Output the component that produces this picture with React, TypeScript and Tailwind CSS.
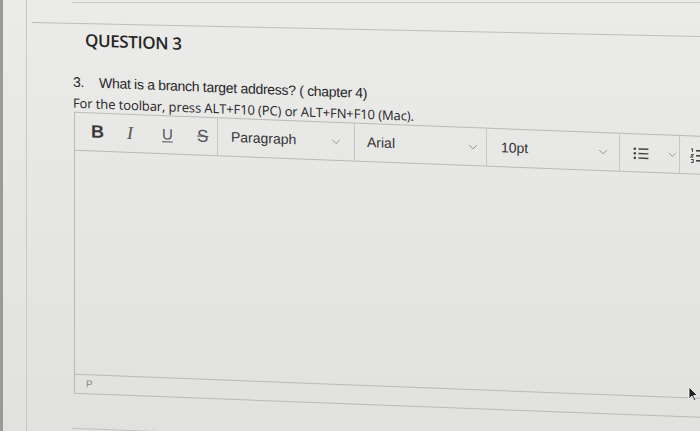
import React from 'react';
import { ChevronDown } from 'lucide-react';

const Chevron = () => <ChevronDown size={14} strokeWidth={1.5} className="text-[#8a8a8a]" />;

const BulletIcon = () => (
  <svg width="18" height="16" viewBox="0 0 18 16" fill="none">
    <circle cx="2" cy="3" r="1.4" fill="#444" />
    <circle cx="2" cy="8" r="1.4" fill="#444" />
    <circle cx="2" cy="13" r="1.4" fill="#444" />
    <path d="M6 3h11M6 8h11M6 13h11" stroke="#444" strokeWidth="1.6" />
  </svg>
);

const NumberIcon = () => (
  <svg width="18" height="16" viewBox="0 0 18 16" fill="none">
    <path d="M1 1.5h1.5v3M1 7h2.2L1 9.5h2.4M1 12h2.2v3H1" stroke="#444" strokeWidth="1" />
    <path d="M6 3h11M6 8h11M6 13h11" stroke="#444" strokeWidth="1.6" />
  </svg>
);

const Cursor = () => (
  <svg width="10" height="16" viewBox="0 0 10 16">
    <path d="M1 1v12l3-3 2.5 5 1.6-.8L5.6 9.5H9.5z" fill="#222" stroke="#fff" strokeWidth="0.8" />
  </svg>
);

export default function App() {
  return (
    <div className="relative flex w-[700px] h-[431px] overflow-hidden bg-gradient-to-b from-[#ebebe9] to-[#e1e1df] font-['Open_Sans',sans-serif] text-[#262626]">
      {/* screen edge */}
      <div className="w-[3px] shrink-0 bg-[#9a9a98]" />
      <div className="w-[24px] shrink-0 border-r border-[#c9c9c7]" />

      <div className="flex-1 min-w-0">
        {/* top rules */}
        <div className="mt-[2px] ml-[45px] w-[700px] h-px bg-[#c8c8c6]" />
        <div className="mt-[19px] ml-[5px] w-[720px] h-px bg-[#bdbdbb] rotate-[1.2deg] origin-top-left" />

        <div className="skew-y-[2.2deg] origin-top-left">
          <div className="pl-[58px] pt-[4px] text-[17px] font-semibold leading-[21px] tracking-[-0.4px]">
            QUESTION 3
          </div>

          <div className="pl-[46px] mt-[24px] text-[14px] leading-[16px] tracking-[-0.3px] font-['Liberation_Sans',sans-serif] flex">
            <span className="w-[26px]">3.</span>
            <span>What is a branch target address? ( chapter 4)</span>
          </div>
          <div className="pl-[46px] mt-[5px] text-[13px] leading-[16px] tracking-[-0.1px]">
            For the toolbar, press ALT+F10 (PC) or ALT+FN+F10 (Mac).
          </div>

          {/* editor */}
          <div className="ml-[47px] mt-[1px] w-[700px] border border-[#b9b9b7] font-['Liberation_Sans',sans-serif]">
            <div className="flex h-[38px] border-b border-[#b9b9b7] text-[14px] text-[#333]">
              <div className="w-[143px] flex items-center pl-[16px] border-r border-[#c6c6c4]">
                <span className="w-[36px] text-[18px] font-bold text-[#3a3a3a]">B</span>
                <span className="w-[35px] text-[18px] italic font-['Liberation_Serif',serif] text-[#555]">I</span>
                <span className="w-[35px] text-[15px] underline underline-offset-2 text-[#555]">U</span>
                <span className="w-[20px] text-[17px] line-through text-[#555]">S</span>
              </div>
              <div className="w-[137px] flex items-center justify-between pl-[13px] pr-[11px] border-r border-[#c6c6c4]">
                <span>Paragraph</span>
                <Chevron />
              </div>
              <div className="w-[132px] flex items-center justify-between pl-[12px] pr-[6px] border-r border-[#c6c6c4]">
                <span>Arial</span>
                <Chevron />
              </div>
              <div className="w-[133px] flex items-center justify-between pl-[14px] pr-[9px] border-r border-[#c6c6c4]">
                <span>10pt</span>
                <Chevron />
              </div>
              <div className="w-[60px] flex items-center gap-[17px] pl-[13px] border-r border-[#c6c6c4]">
                <BulletIcon />
                <Chevron />
              </div>
              <div className="flex items-center pl-[10px]">
                <NumberIcon />
              </div>
            </div>
            <div className="h-[223px]" />
            <div className="h-[19px] border-t border-[#b9b9b7] pl-[11px] text-[10px] leading-[18px] text-[#8a8a8a]">
              P
            </div>
          </div>

          <div className="mt-[34px] ml-[45px] w-[120px] h-px bg-[#c2c2c0]" />
        </div>
      </div>

      <div className="absolute left-[688px] top-[386px]">
        <Cursor />
      </div>
    </div>
  );
}
